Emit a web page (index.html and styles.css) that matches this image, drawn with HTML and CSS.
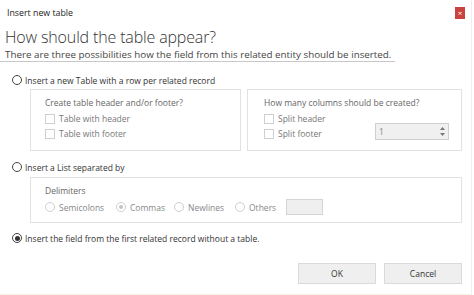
FILE: index.html
```html
<!DOCTYPE html>
<html>
<head>
<meta charset="utf-8">
<link rel="stylesheet" href="styles.css">
</head>
<body>
<div class="dialog">
  <div class="titlebar">
    <span class="title">Insert new table</span>
    <span class="close">×</span>
  </div>
  <div class="heading">How should the table appear?</div>
  <div class="subtitle">There are three possibilities how the field from this related entity should be inserted.</div>

  <div class="option first">
    <span class="radio"></span>
    <span class="label">Insert a new Table with a row per related record</span>
  </div>
  <div class="boxes">
    <div class="box box-left">
      <div class="box-title">Create table header and/or footer?</div>
      <div class="check-row"><span class="check"></span><span>Table with header</span></div>
      <div class="check-row"><span class="check"></span><span>Table with footer</span></div>
    </div>
    <div class="box box-right">
      <div class="box-title">How many columns should be created?</div>
      <div class="split">
        <div class="checks">
          <div class="check-row"><span class="check"></span><span>Split header</span></div>
          <div class="check-row"><span class="check"></span><span>Split footer</span></div>
        </div>
        <div class="spinner">
          <span class="spin-value">1</span>
          <span class="spin-arrows">
            <svg width="5" height="3" viewBox="0 0 5 3"><path d="M0 3 L2.5 0 L5 3 Z" fill="#777"/></svg>
            <svg width="5" height="3" viewBox="0 0 5 3"><path d="M0 0 L2.5 3 L5 0 Z" fill="#777"/></svg>
          </span>
        </div>
      </div>
    </div>
  </div>

  <div class="option second">
    <span class="radio"></span>
    <span class="label">Insert a List separated by</span>
  </div>
  <div class="box box-wide">
    <div class="box-title">Delimiters</div>
    <div class="delims">
      <div class="delim w-semi"><span class="radio dis"></span><span>Semicolons</span></div>
      <div class="delim w-comma"><span class="radio dis on"></span><span>Commas</span></div>
      <div class="delim w-new"><span class="radio dis"></span><span>Newlines</span></div>
      <div class="delim w-other"><span class="radio dis"></span><span>Others</span></div>
      <div class="other-input"></div>
    </div>
  </div>

  <div class="option third">
    <span class="radio checked"></span>
    <span class="label">Insert the field from the first related record without a table.</span>
  </div>

  <div class="buttons">
    <div class="btn">OK</div>
    <div class="btn">Cancel</div>
  </div>
</div>
</body>
</html>
```

FILE: styles.css
```css
html, body {
  margin: 0;
  padding: 0;
  background: #ffffff;
}
body {
  font-family: "Open Sans", "Noto Sans", sans-serif;
  color: #333;
}
.dialog {
  box-sizing: border-box;
  width: 472px;
  height: 295px;
  border-right: 1px solid #efefef;
  border-bottom: 1px solid #f6f2e6;
  overflow: hidden;
}
.titlebar {
  height: 26px;
  display: flex;
  align-items: center;
  justify-content: space-between;
  padding: 0 6px 0 7px;
}
.title {
  font-size: 8.8px;
  color: #222;
}
.close {
  width: 10px;
  height: 12px;
  background: #c9443f;
  color: #fff;
  font-size: 8px;
  line-height: 12px;
  text-align: center;
}
.heading {
  padding-left: 5px;
  height: 22px;
  line-height: 22px;
  font-size: 16px;
  letter-spacing: -0.15px;
  font-weight: 300;
  color: #333;
}
.subtitle {
  box-sizing: border-box;
  width: 395px;
  padding-left: 5px;
  height: 14px;
  line-height: 13px;
  font-size: 9.8px;
  color: #444;
  border-bottom: 1px solid #c8c8c8;
}
.option {
  display: flex;
  align-items: center;
  height: 14px;
  padding-left: 12px;
  gap: 3px;
  font-size: 8.5px;
  color: #333;
}
.option.first { margin-top: 11px; }
.option.second { margin-top: 9px; }
.option.third { margin-top: 8px; }
.radio {
  box-sizing: border-box;
  width: 10px;
  height: 10px;
  border: 1px solid #444;
  border-radius: 50%;
  display: inline-flex;
  align-items: center;
  justify-content: center;
  flex: none;
}
.radio.checked::after {
  content: "";
  width: 5px;
  height: 5px;
  border-radius: 50%;
  background: #333;
}
.radio.dis {
  border-color: #cfcfcf;
}
.radio.dis.on::after {
  content: "";
  width: 4px;
  height: 4px;
  border-radius: 50%;
  background: #c4c4c4;
}
.boxes {
  display: flex;
  gap: 6px;
  margin: 2px 0 0 30px;
  width: 432px;
}
.box {
  box-sizing: border-box;
  border: 1px solid #e2e2e2;
  height: 62px;
  padding-top: 6px;
  font-size: 8.5px;
}
.box-left { width: 211px; padding-left: 14px; }
.box-right { width: 215px; padding-left: 16px; padding-right: 12px; }
.box-title {
  height: 15px;
  line-height: 14px;
  color: #666;
}
.check-row {
  display: flex;
  align-items: center;
  gap: 4px;
  height: 15px;
  color: #777;
}
.check {
  box-sizing: border-box;
  width: 10px;
  height: 10px;
  border: 1px solid #cfcfcf;
  background: #fff;
  flex: none;
}
.split {
  display: flex;
  justify-content: space-between;
}
.spinner {
  box-sizing: border-box;
  width: 74px;
  height: 17px;
  margin-top: 12px;
  border: 1px solid #cfcfcf;
  background: #f0f0f0;
  display: flex;
  align-items: center;
  justify-content: space-between;
  padding: 0 3px 0 3px;
  color: #888;
}
.spin-value { font-size: 8.5px; }
.spin-arrows {
  display: flex;
  flex-direction: column;
  gap: 3px;
}
.spin-arrows svg { display: block; }
.box-wide {
  width: 432px;
  height: 46px;
  margin: 3px 0 0 30px;
  padding-left: 14px;
}
.delims {
  display: flex;
  align-items: center;
  height: 16px;
  color: #888;
}
.delim {
  display: flex;
  align-items: center;
  gap: 4px;
}
.w-semi { width: 71px; }
.w-comma { width: 58px; }
.w-new { width: 61px; }
.w-other { width: 51px; }
.other-input {
  box-sizing: border-box;
  width: 37px;
  height: 16px;
  border: 1px solid #d4d4d4;
  background: #efefef;
}
.buttons {
  display: flex;
  justify-content: flex-end;
  gap: 8px;
  margin-top: 18px;
  padding-right: 9px;
}
.btn {
  box-sizing: border-box;
  width: 78px;
  height: 21px;
  border: 1px solid #dadada;
  background: #efefef;
  font-size: 8.5px;
  color: #333;
  display: flex;
  align-items: center;
  justify-content: center;
}
```
